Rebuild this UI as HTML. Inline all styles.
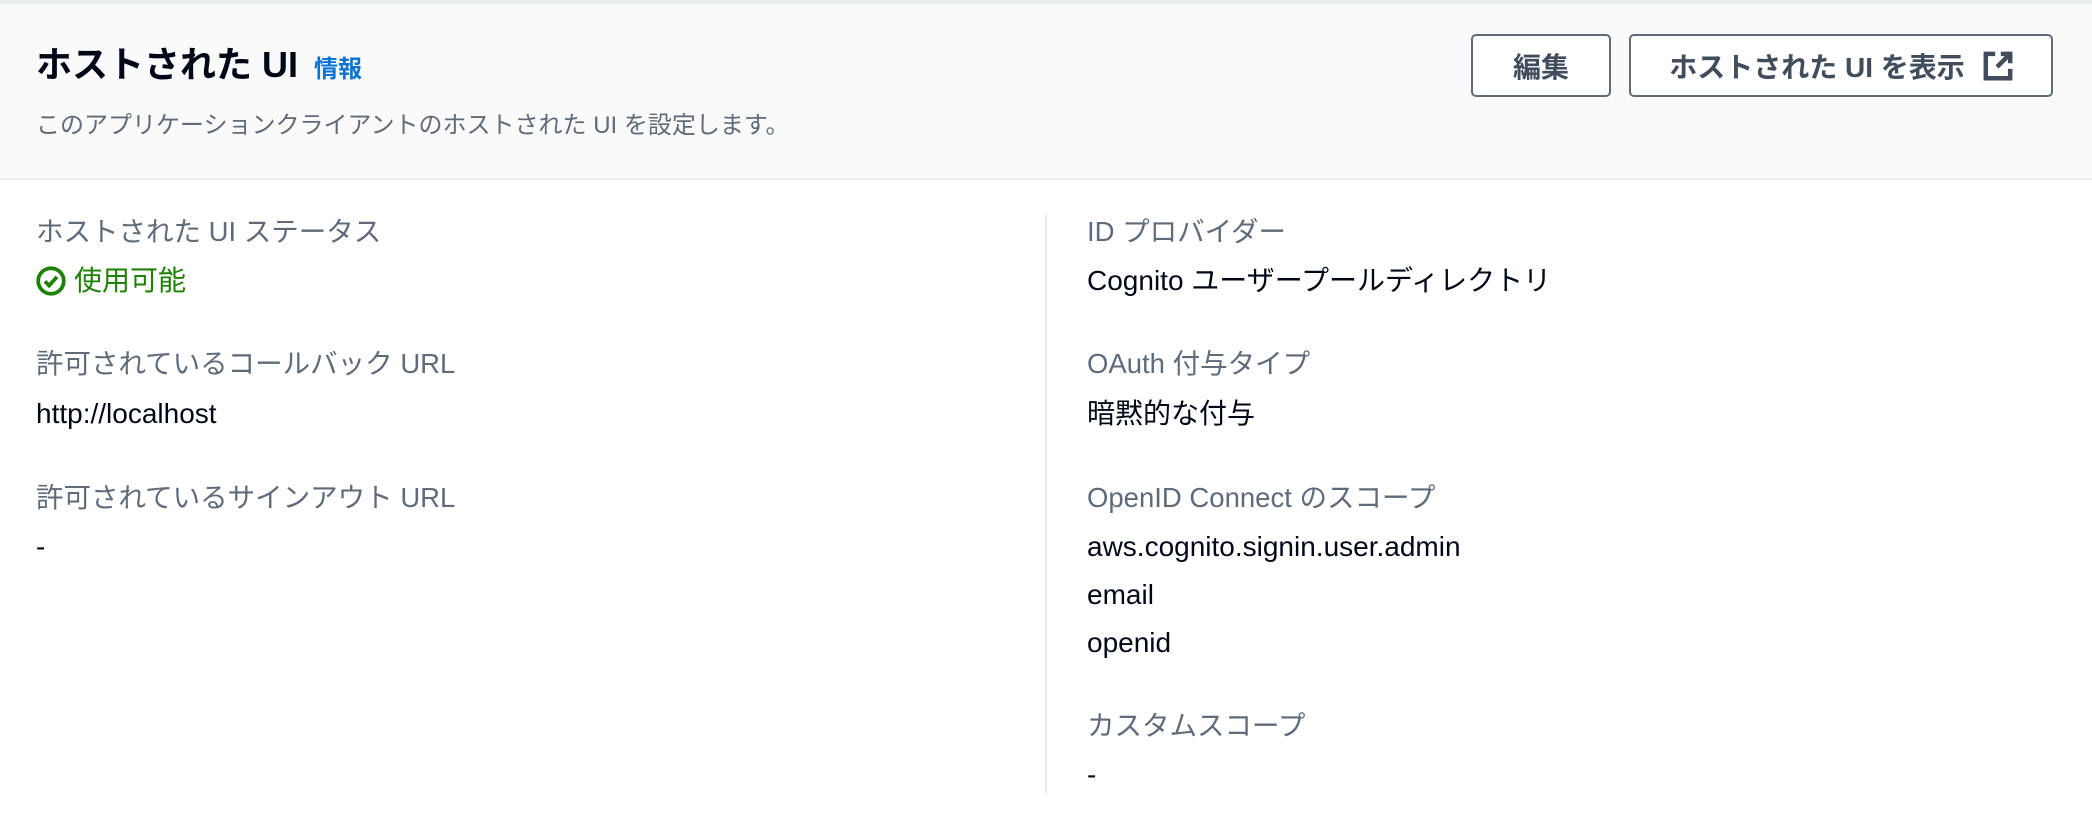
<!DOCTYPE html>
<html><head><meta charset="utf-8"><style>
*{margin:0;padding:0;box-sizing:border-box}
body{width:2092px;height:836px;background:#fff;font-family:"Liberation Sans","Noto Sans CJK JP",sans-serif;position:relative;overflow:hidden}
.hdr{position:absolute;left:0;top:0;width:2092px;height:180px;background:#fafafa;border-top:4px solid #eaeded;border-bottom:2px solid #eaeded}
.a{position:absolute;white-space:nowrap;line-height:48px}
.lbl{font-size:27.5px;color:#5f6b7a}
.val{font-size:28px;color:#000716}
.btn{position:absolute;top:34px;height:63px;border:2px solid #5f6b7a;border-radius:5px;background:#fff;color:#414d5c;font-weight:bold;font-size:28px;display:flex;align-items:center;justify-content:center;gap:18px}
</style></head><body>
<div class="hdr"></div>
<div class="a" style="left:36px;top:41px;font-size:36px;font-weight:bold;color:#000716">ホストされた UI <span style="font-size:24px;color:#0972d3;margin-left:6px">情報</span></div>
<div class="a lbl" style="left:36px;top:102px;font-size:24px">このアプリケーションクライアントのホストされた UI を設定します。</div>
<div class="btn" style="left:1471px;width:140px">編集</div>
<div class="btn" style="left:1629px;width:424px">ホストされた UI を表示
<svg width="30" height="30" viewBox="0 0 16 16" fill="none" stroke="#414d5c" stroke-width="2.4"><path d="M6.5 1.5H1.5v13h13V9.5M9.5 1.5h5v5M14.5 1.5 7.5 8.5"/></svg></div>
<div style="position:absolute;left:1045px;top:213px;width:2px;height:582px;background:#e9ebed"></div>

<div class="a lbl" style="left:36px;top:208px">ホストされた UI ステータス</div>
<div class="a" style="left:36px;top:257px;font-size:28px;color:#1d8102;display:flex;align-items:center;gap:8px">
<svg width="30" height="30" viewBox="0 0 16 16" fill="none" stroke="#1d8102" stroke-width="2"><circle cx="8" cy="8" r="6.8"/><path d="M4.8 8.2 7 10.4l4.2-4.6"/></svg>使用可能</div>
<div class="a lbl" style="left:36px;top:340px">許可されているコールバック URL</div>
<div class="a val" style="left:36px;top:390px">http://localhost</div>
<div class="a lbl" style="left:36px;top:474px">許可されているサインアウト URL</div>
<div class="a val" style="left:36px;top:523px">-</div>

<div class="a lbl" style="left:1087px;top:208px">ID プロバイダー</div>
<div class="a val" style="left:1087px;top:257px">Cognito ユーザープールディレクトリ</div>
<div class="a lbl" style="left:1087px;top:340px">OAuth 付与タイプ</div>
<div class="a val" style="left:1087px;top:390px">暗黙的な付与</div>
<div class="a lbl" style="left:1087px;top:474px">OpenID Connect のスコープ</div>
<div class="a val" style="left:1087px;top:523px">aws.cognito.signin.user.admin</div>
<div class="a val" style="left:1087px;top:571px">email</div>
<div class="a val" style="left:1087px;top:619px">openid</div>
<div class="a lbl" style="left:1087px;top:702px">カスタムスコープ</div>
<div class="a val" style="left:1087px;top:751px">-</div>
</body></html>
